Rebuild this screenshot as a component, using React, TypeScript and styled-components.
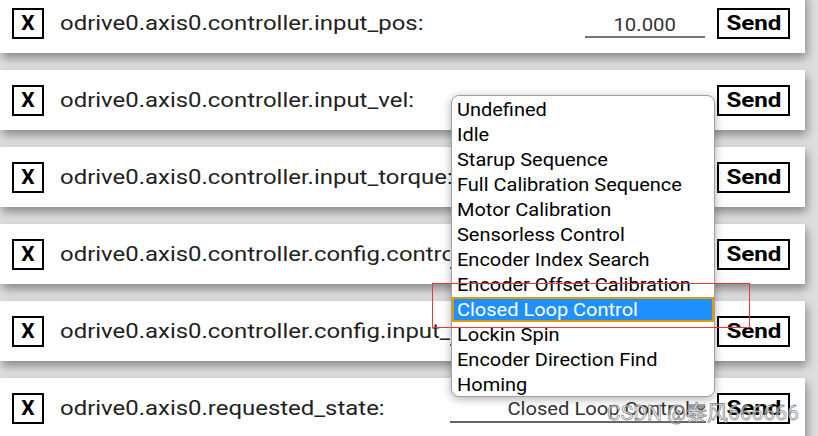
import React from "react";
import styled, { createGlobalStyle } from "styled-components";

const Global = createGlobalStyle`
  html, body { margin: 0; padding: 0; background: #dedede; overflow: hidden; }
  body { font-family: Roboto, "Noto Sans", Arial, sans-serif; }
`;

const Page = styled.div`
  position: relative;
  width: 818px;
  height: 436px;
  overflow: hidden;
`;

const List = styled.div`
  display: flex;
  flex-direction: column;
  gap: 17px;
  margin-top: -7px;
  width: 805px;
`;

const Card = styled.div`
  height: 60px;
  background: #fff;
  box-shadow: 2px 5px 9px rgba(0, 0, 0, 0.38);
  display: flex;
  align-items: center;
  padding: 0 15px 0 12px;
  box-sizing: border-box;
`;

/* the reference is horizontally stretched a little: text is widened to match */
const Wide = styled.span<{ $k: number; $o?: string }>`
  display: inline-block;
  transform: scaleX(${(p) => p.$k});
  transform-origin: ${(p) => p.$o || "center"};
`;

const XBtn = styled.div`
  width: 32px;
  height: 31px;
  box-sizing: border-box;
  border: 2px solid #000;
  display: flex;
  align-items: center;
  justify-content: center;
  font-weight: 700;
  font-size: 21px;
  color: #000;
  flex: none;
`;

const Label = styled.div`
  margin-left: 16px;
  flex: 1;
  min-width: 0;
  white-space: nowrap;
  overflow: hidden;
  font-size: 21px;
  color: #222;
`;

const ValueInput = styled.div<{ $w: number }>`
  width: ${(p) => p.$w}px;
  height: 26px;
  margin-top: 4px;
  box-sizing: border-box;
  border-bottom: 2px solid #777;
  display: flex;
  align-items: center;
  justify-content: center;
  font-size: 18px;
  color: #333;
  margin-right: 12px;
  flex: none;
`;

const SelectBox = styled.div`
  width: 256px;
  height: 26px;
  margin-top: 4px;
  box-sizing: border-box;
  border-bottom: 2px solid #666;
  display: flex;
  align-items: center;
  justify-content: flex-end;
  gap: 6px;
  font-size: 18px;
  color: #333;
  margin-right: 11px;
  padding-bottom: 2px;
  flex: none;
`;

const SendBtn = styled.div`
  width: 73px;
  height: 31px;
  box-sizing: border-box;
  border: 2px solid #000;
  display: flex;
  align-items: center;
  justify-content: center;
  font-weight: 700;
  font-size: 21px;
  color: #000;
  flex: none;
`;

const Dropdown = styled.div`
  position: absolute;
  left: 451px;
  top: 95px;
  width: 264px;
  height: 302px;
  box-sizing: border-box;
  background: #fff;
  border: 1px solid #a0a0a0;
  border-radius: 8px;
  box-shadow: 0 2px 10px rgba(0, 0, 0, 0.32);
  padding-top: 1px;
  overflow: hidden;
`;

const Option = styled.div<{ $sel?: boolean }>`
  height: 25px;
  line-height: 25px;
  padding-left: 5px;
  font-size: 18px;
  color: ${(p) => (p.$sel ? "#fff" : "#000")};
  background: ${(p) => (p.$sel ? "#1e90ff" : "transparent")};
  box-shadow: ${(p) => (p.$sel ? "inset 0 0 0 2px #e29a00" : "none")};
  white-space: nowrap;
`;

const RedBox = styled.div`
  position: absolute;
  left: 432px;
  top: 283px;
  width: 318px;
  height: 45px;
  box-sizing: border-box;
  border: 1px solid #e53935;
  pointer-events: none;
`;

const Watermark = styled.div`
  position: absolute;
  left: 607px;
  top: 396px;
  font-size: 21px;
  font-family: Roboto, "Noto Sans CJK SC", sans-serif;
  color: rgba(255, 255, 255, 0.7);
  -webkit-text-stroke: 0.8px rgba(90, 90, 90, 0.7);
  white-space: nowrap;
  pointer-events: none;
`;

const Chevron = () => (
  <svg width="10" height="7" viewBox="0 0 10 7">
    <path d="M1 1.5l4 4 4-4" fill="none" stroke="#333" strokeWidth="1.4" />
  </svg>
);

type Row = { label: string; value?: string; select?: boolean };

const rows: Row[] = [
  { label: "odrive0.axis0.controller.input_pos:", value: "10.000" },
  { label: "odrive0.axis0.controller.input_vel:", value: "" },
  { label: "odrive0.axis0.controller.input_torque:", value: "" },
  { label: "odrive0.axis0.controller.config.control_mode:", select: true, value: "" },
  { label: "odrive0.axis0.controller.config.input_mode:", select: true, value: "" },
  { label: "odrive0.axis0.requested_state:", select: true, value: "Closed Loop Control" },
];

const options = [
  "Undefined",
  "Idle",
  "Starup Sequence",
  "Full Calibration Sequence",
  "Motor Calibration",
  "Sensorless Control",
  "Encoder Index Search",
  "Encoder Offset Calibration",
  "Closed Loop Control",
  "Lockin Spin",
  "Encoder Direction Find",
  "Homing",
];

export default function App() {
  return (
    <Page>
      <Global />
      <List>
        {rows.map((r) => (
          <Card key={r.label}>
            <XBtn>X</XBtn>
            <Label>
              <Wide $k={1.14} $o="left">{r.label}</Wide>
            </Label>
            {r.select ? (
              <SelectBox>
                <Wide $k={1.12} $o="right">{r.value}</Wide>
                {r.value && <Chevron />}
              </SelectBox>
            ) : (
              <ValueInput $w={120}>
                <Wide $k={1.13}>{r.value}</Wide>
              </ValueInput>
            )}
            <SendBtn>
              <Wide $k={1.15}>Send</Wide>
            </SendBtn>
          </Card>
        ))}
      </List>
      <Dropdown>
        {options.map((o) => (
          <Option key={o} $sel={o === "Closed Loop Control"}>
            <Wide $k={1.11} $o="left">{o}</Wide>
          </Option>
        ))}
      </Dropdown>
      <RedBox />
      <Watermark>CSDN @秦风666666</Watermark>
    </Page>
  );
}
